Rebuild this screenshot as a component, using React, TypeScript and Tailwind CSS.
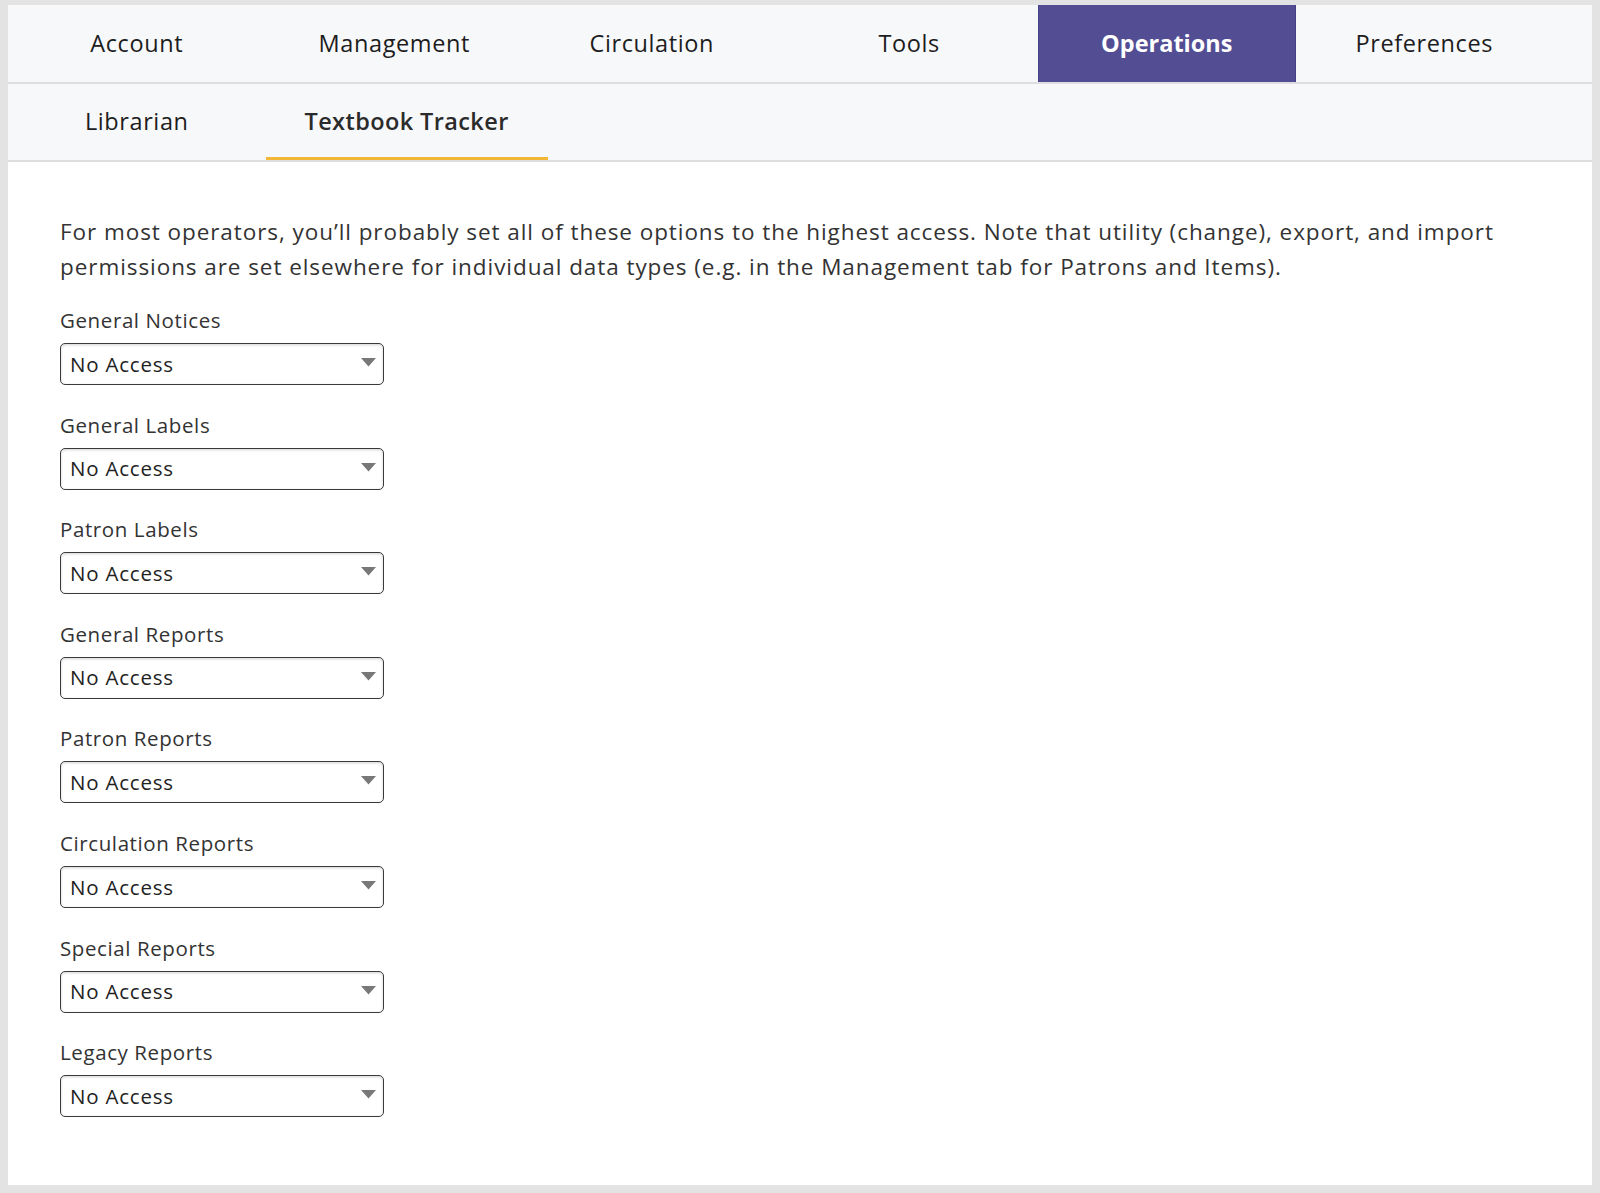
import React from 'react';

const TOP_TABS = ['Account', 'Management', 'Circulation', 'Tools', 'Operations', 'Preferences'];
const ACTIVE_TOP = 'Operations';

const SUB_TABS = ['Librarian', 'Textbook Tracker'];
const ACTIVE_SUB = 'Textbook Tracker';

const PERMISSIONS = [
  'General Notices',
  'General Labels',
  'Patron Labels',
  'General Reports',
  'Patron Reports',
  'Circulation Reports',
  'Special Reports',
  'Legacy Reports',
];

const font = { fontFamily: '"Open Sans", "Noto Sans", sans-serif' };

const PermissionSelect: React.FC<{ label: string }> = ({ label }) => (
  <div className="mb-[25.6px]">
    <label className="block text-[20.5px] leading-[28px] tracking-[0.6px] text-[#333]">{label}</label>
    <div className="relative mt-[9px] w-[324px]">
      <select
        defaultValue="none"
        className="w-full h-[42px] appearance-none bg-white border border-[#3a3a3a] rounded-[5px] pl-[9px] pr-8 text-[20.5px] tracking-[0.8px] text-[#222] shadow-[inset_0_1px_3px_rgba(0,0,0,0.18)] outline-none"
        style={font}
      >
        <option value="none">No Access</option>
        <option value="view">View</option>
        <option value="full">Full Access</option>
      </select>
      <svg
        className="pointer-events-none absolute right-[8px] top-[15px]"
        width="15"
        height="9"
        viewBox="0 0 15 9"
      >
        <path d="M0 0 H15 L7.5 8.5 Z" fill="#787878" />
      </svg>
    </div>
  </div>
);

const App: React.FC = () => {
  return (
    <div className="min-h-screen h-screen flex flex-col bg-[#e4e3e4] pt-[5px] px-[8px] pb-[8px]" style={font}>
      <div className="flex-1 flex flex-col bg-white">
        {/* Top navigation */}
        <nav className="flex h-[79px] bg-[#f7f8fa] border-b-2 border-[#dedee0]">
          {TOP_TABS.map((tab) => (
            <button
              key={tab}
              className={
                tab === ACTIVE_TOP
                  ? 'w-[257.5px] h-[77px] flex items-center justify-center bg-[#534d94] border-x border-[#463f8a] text-white font-bold text-[23.5px]'
                  : 'w-[257.5px] h-[77px] flex items-center justify-center text-[#1d1d1d] text-[23.5px] tracking-[0.6px]'
              }
            >
              {tab}
            </button>
          ))}
        </nav>

        {/* Sub navigation */}
        <nav className="flex h-[78px] bg-[#f7f8fa] border-b-2 border-[#dedee0]">
          {SUB_TABS.map((tab) => (
            <button
              key={tab}
              className={
                tab === ACTIVE_SUB
                  ? 'min-w-[257.5px] px-[39px] h-[76px] flex items-center justify-center border-b-[3px] border-[#f2b835] pt-[3px] text-[#2b2b2b] font-semibold text-[23.5px] tracking-[0.4px]'
                  : 'min-w-[257.5px] px-[39px] h-[76px] flex items-center justify-center border-b-[3px] border-transparent pt-[3px] text-[#1d1d1d] text-[23.5px] tracking-[0.6px]'
              }
            >
              {tab}
            </button>
          ))}
        </nav>

        {/* Content */}
        <div className="pl-[52px] pr-[60px] pt-[52px]">
          <p className="text-[22.5px] leading-[35px] tracking-[0.93px] text-[#333] mb-[22px] max-w-[1470px]">
            For most operators, you’ll probably set all of these options to the highest access. Note that utility (change), export, and import permissions are set elsewhere for individual data types (e.g. in the Management tab for Patrons and Items).
          </p>
          {PERMISSIONS.map((p) => (
            <PermissionSelect key={p} label={p} />
          ))}
        </div>
      </div>
    </div>
  );
};

export default App;
